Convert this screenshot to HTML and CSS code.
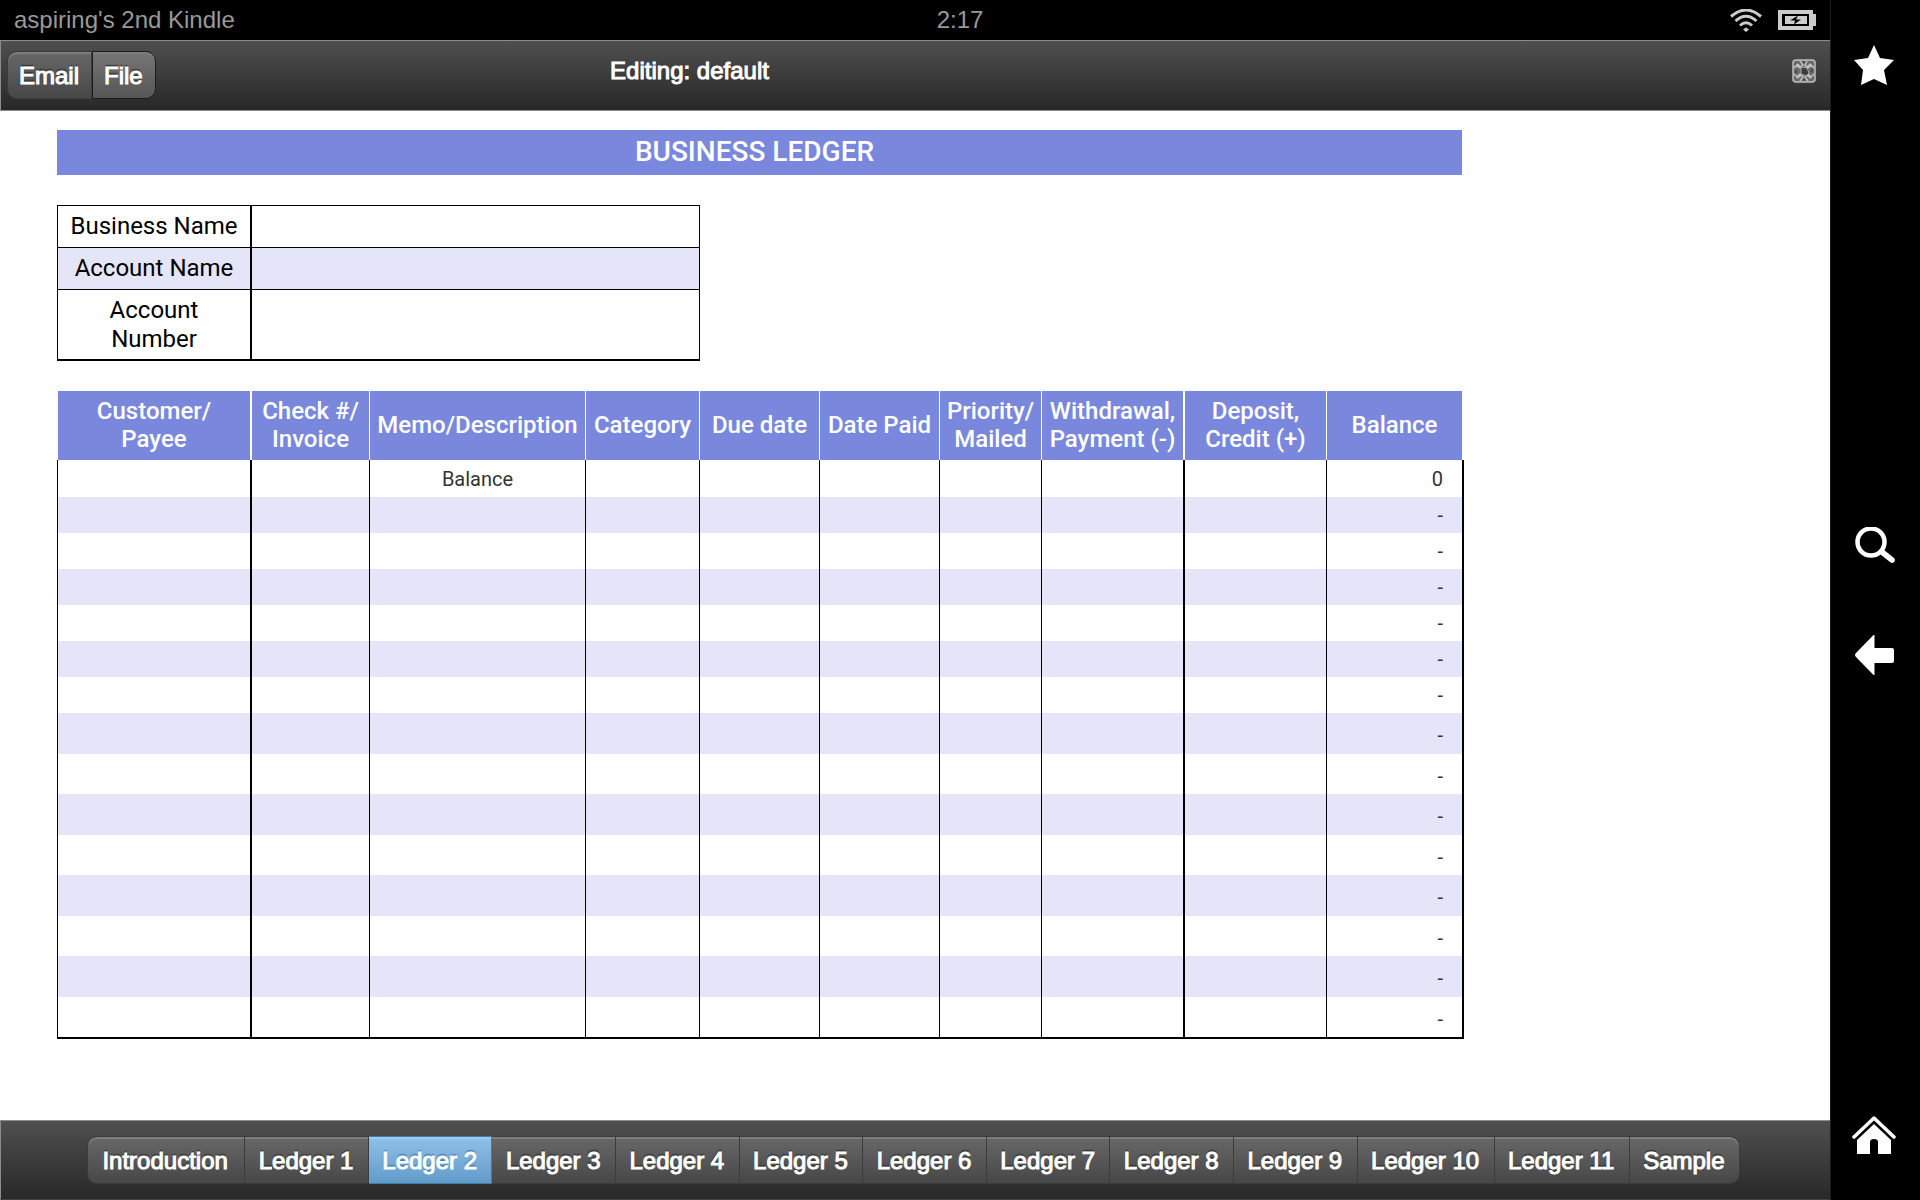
FILE: index.html
```
<!DOCTYPE html>
<html lang="en">
<head>
  <meta charset="UTF-8">
  <title>Business Ledger</title>
  <meta name="viewport" content="width=device-width, initial-scale=1.0">
  <link rel="stylesheet" href="styles.css">
</head>
<body>

  <div class="app">

    <!-- Device status bar -->
    <div class="status-bar">
      <span class="device">aspiring's 2nd Kindle</span>
      <span class="clock">2:17</span>
      <span class="status-icons">
        <svg width="32" height="23" viewBox="0 0 32 23" fill="none" stroke="#ccc" stroke-width="3">
          <path d="M1 7.500Q16-5.500 31 7.500"/>
          <path d="M5.500 12Q16 2.500 26.500 12"/>
          <path d="M10 16.500Q16 11 22 16.500"/>
          <path d="M16 18.500l3 2-3 2.500-3-2.500z" fill="#ccc" stroke="none"/>
        </svg>
        <svg width="38" height="20" viewBox="0 0 38 20">
          <path d="M0 0h35v4h3v12h-3v4H0zM4 4v12h27V4z" fill="#ccc" fill-rule="evenodd"/>
          <path d="M7 6h22v8H7z" fill="#ccc"/>
          <path d="M20 5.500l-8 5h5l-1 4 7-5h-5z" fill="#000"/>
        </svg>
      </span>
    </div>

    <!-- Toolbar -->
    <header class="toolbar">
      <div class="btn-group">
        <button type="button" class="bar-btn">Email</button>
        <button type="button" class="bar-btn raised">File</button>
      </div>
      <h1>Editing: default</h1>
      <button type="button" class="expand-btn" aria-label="Full screen">
        <svg width="24" height="24" viewBox="0 0 24 24" fill="none" stroke="#c0c0c0" stroke-width="1.500">
          <rect x="1" y="1" width="22" height="22" rx="3" fill="#6a6a6a"/>
          <path d="M2 9l3-3 3 3 3-3-3-4M15 2l-2 4 3 3 3-3 3 3M2 15l3 3 3-3 3 3-3 4M22 15l-3 3-3-3-3 3 3 4"/>
          <path d="M5 5l5 4M19 5l-5 4M5 19l5-4M19 19l-5-4" stroke-width="2"/>
          <path d="M9 8l6 1 2 5-3 3-5-2z" fill="#3c3c3c" stroke="#aaa" stroke-width="1"/>
          <path d="M4 11v3M20 10v3M11 3.500h2M11 20.500h2" stroke="#444"/>
        </svg>
      </button>
    </header>

    <!-- Sheet -->
    <main class="sheet">
      <h2 class="banner">BUSINESS LEDGER</h2>

      <table class="info-table">
        <tr>
          <th><label for="businessName">Business Name</label></th>
          <td><input type="text" id="businessName"></td>
        </tr>
        <tr class="shaded">
          <th><label for="accountName">Account Name</label></th>
          <td><input type="text" id="accountName"></td>
        </tr>
        <tr>
          <th><label for="accountNumber">Account Number</label></th>
          <td><input type="text" id="accountNumber"></td>
        </tr>
      </table>

      <table class="ledger-table">
        <colgroup>
          <col class="col-customer">
          <col class="col-check">
          <col class="col-memo">
          <col class="col-category">
          <col class="col-date">
          <col class="col-date">
          <col class="col-priority">
          <col class="col-amount">
          <col class="col-deposit">
          <col class="col-balance">
        </colgroup>
        <thead>
          <tr>
            <th class="thick">Customer/<br>Payee</th>
            <th>Check #/<br>Invoice</th>
            <th>Memo/Description</th>
            <th>Category</th>
            <th>Due date</th>
            <th>Date Paid</th>
            <th>Priority/<br>Mailed</th>
            <th class="thick">Withdrawal,<br>Payment (-)</th>
            <th>Deposit,<br>Credit (+)</th>
            <th class="thick">Balance</th>
          </tr>
        </thead>
        <tbody class="rows-short">
          <tr><td class="thick"></td><td></td><td>Balance</td><td></td><td></td><td></td><td></td><td class="thick"></td><td></td><td class="thick num">0</td></tr>
          <tr><td class="thick"></td><td></td><td></td><td></td><td></td><td></td><td></td><td class="thick"></td><td></td><td class="thick num">-</td></tr>
          <tr><td class="thick"></td><td></td><td></td><td></td><td></td><td></td><td></td><td class="thick"></td><td></td><td class="thick num">-</td></tr>
          <tr><td class="thick"></td><td></td><td></td><td></td><td></td><td></td><td></td><td class="thick"></td><td></td><td class="thick num">-</td></tr>
          <tr><td class="thick"></td><td></td><td></td><td></td><td></td><td></td><td></td><td class="thick"></td><td></td><td class="thick num">-</td></tr>
          <tr><td class="thick"></td><td></td><td></td><td></td><td></td><td></td><td></td><td class="thick"></td><td></td><td class="thick num">-</td></tr>
          <tr><td class="thick"></td><td></td><td></td><td></td><td></td><td></td><td></td><td class="thick"></td><td></td><td class="thick num">-</td></tr>
        </tbody>
        <tbody class="rows-tall">
          <tr><td class="thick"></td><td></td><td></td><td></td><td></td><td></td><td></td><td class="thick"></td><td></td><td class="thick num">-</td></tr>
          <tr><td class="thick"></td><td></td><td></td><td></td><td></td><td></td><td></td><td class="thick"></td><td></td><td class="thick num">-</td></tr>
          <tr><td class="thick"></td><td></td><td></td><td></td><td></td><td></td><td></td><td class="thick"></td><td></td><td class="thick num">-</td></tr>
          <tr><td class="thick"></td><td></td><td></td><td></td><td></td><td></td><td></td><td class="thick"></td><td></td><td class="thick num">-</td></tr>
          <tr><td class="thick"></td><td></td><td></td><td></td><td></td><td></td><td></td><td class="thick"></td><td></td><td class="thick num">-</td></tr>
          <tr><td class="thick"></td><td></td><td></td><td></td><td></td><td></td><td></td><td class="thick"></td><td></td><td class="thick num">-</td></tr>
          <tr><td class="thick"></td><td></td><td></td><td></td><td></td><td></td><td></td><td class="thick"></td><td></td><td class="thick num">-</td></tr>
          <tr><td class="thick"></td><td></td><td></td><td></td><td></td><td></td><td></td><td class="thick"></td><td></td><td class="thick num">-</td></tr>
        </tbody>
      </table>
    </main>

    <!-- Sheet tabs -->
    <nav class="tab-bar">
      <div class="btn-group">
        <button type="button" class="bar-btn">Introduction</button>
        <button type="button" class="bar-btn">Ledger 1</button>
        <button type="button" class="bar-btn active">Ledger 2</button>
        <button type="button" class="bar-btn">Ledger 3</button>
        <button type="button" class="bar-btn">Ledger 4</button>
        <button type="button" class="bar-btn">Ledger 5</button>
        <button type="button" class="bar-btn">Ledger 6</button>
        <button type="button" class="bar-btn">Ledger 7</button>
        <button type="button" class="bar-btn">Ledger 8</button>
        <button type="button" class="bar-btn">Ledger 9</button>
        <button type="button" class="bar-btn">Ledger 10</button>
        <button type="button" class="bar-btn">Ledger 11</button>
        <button type="button" class="bar-btn">Sample</button>
      </div>
    </nav>

  </div>

  <!-- Device side bar -->
  <aside class="side-bar">
    <button type="button" class="side-btn" aria-label="Favorites">
      <svg width="42" height="42" viewBox="0 0 42 42" fill="#fff">
        <path d="M21 1l6 13 14 2-10 10 3 15-13-6-13 6 2-15L1 16l14-2z"/>
      </svg>
    </button>
    <div class="side-group">
      <button type="button" class="side-btn" aria-label="Search">
        <svg width="42" height="38" viewBox="0 0 42 38">
          <circle cx="18" cy="15" r="13.500" fill="none" stroke="#fff" stroke-width="4.500"/>
          <path d="M29 25l10 8" stroke="#fff" stroke-width="5.500" stroke-linecap="round"/>
        </svg>
      </button>
      <button type="button" class="side-btn" aria-label="Back">
        <svg width="42" height="40" viewBox="0 0 42 40" fill="#fff">
          <path d="M20 .500c1-1 1.500-.500 1.500.500v12H39q2 0 2 2v11q0 2-2 2H21.500v11c0 1-.500 1.500-1.500.500L3 22q-2-2 0-4z"/>
        </svg>
      </button>
    </div>
    <button type="button" class="side-btn" aria-label="Home">
      <svg width="44" height="38" viewBox="0 0 44 38">
        <path d="M2 21L22 2l20 19" fill="none" stroke="#fff" stroke-width="3.500" stroke-linecap="round" stroke-linejoin="round"/>
        <path d="M22 8l17 16v14H26V26q0-3-4-3t-4 3v12H5V24z" fill="#fff"/>
      </svg>
    </button>
  </aside>

</body>
</html>
```
FILE: styles.css
```
* {
  box-sizing: border-box;
}

body {
  margin: 0;
  display: flex;
  min-height: 100vh;
  background: #000;
  font-family: "Liberation Sans", Arial, sans-serif;
  font-size: 24px;
}

button {
  font: inherit;
  border: none;
  background: none;
  padding: 0;
  cursor: pointer;
}

svg {
  display: block;
}

.app {
  flex: 1;
  display: flex;
  flex-direction: column;
  background: #fff;
}

/* status bar */
.status-bar {
  display: grid;
  grid-template-columns: 1fr auto 1fr;
  align-items: center;
  height: 40px;
  padding: 0 14px;
  background: #000;
  color: #999;
}

.clock {
  padding-left: 90px;
}

.status-icons {
  display: flex;
  justify-content: flex-end;
  align-items: center;
  gap: 16px;
}

/* toolbar and tab bar */
.toolbar,
.tab-bar {
  border: 1px solid #8c8c8c;
  border-right: none;
  background: linear-gradient(#4f4f4f, #282828);
}

.toolbar {
  display: grid;
  grid-template-columns: 1fr auto 1fr;
  align-items: start;
  height: 71px;
  padding: 10px 14px 0 6px;
}

.toolbar h1 {
  margin: 0;
  padding-right: 444px;
  color: #fff;
  font-size: 24px;
  font-weight: normal;
  line-height: 40px;
  -webkit-text-stroke: 1px #fff;
}

.tab-bar {
  height: 80px;
  padding: 15px 90px 0 86px;
  border-bottom-color: #444;
}

.btn-group {
  display: flex;
}

.bar-btn {
  flex: none;
  height: 48px;
  padding: 1px 12px 0 11px;
  border: 1px solid #3c3c3c;
  border-left-width: 0;
  background: linear-gradient(#686868, #474747);
  box-shadow: inset 0 2px 0 #7d7d7d;
  color: #fff;
  text-shadow: 0 -2px 1px #333;
  -webkit-text-stroke: 1px #fff;
}

.bar-btn:first-child {
  border-left-width: 1px;
  border-radius: 10px 0 0 10px;
}

.bar-btn:last-child {
  border-radius: 0 10px 10px 0;
}

.tab-bar .bar-btn {
  flex: 1 1 auto;
}

.tab-bar .bar-btn:first-child {
  padding: 1px 14px 0 12px;
}

.bar-btn.raised {
  border: 1px solid #1c1c1c;
  background: linear-gradient(#767676, #565656);
}

.bar-btn.active {
  border-color: #3d7ea6;
  background: linear-gradient(#90c0e8, #629bc9);
  box-shadow: inset 0 2px 0 #9fcbed;
  text-shadow: 0 -2px 1px #4a7ea8;
}

.expand-btn {
  justify-self: end;
  padding: 8px 0;
}

/* sheet */
.sheet {
  flex: 1;
  padding: 19px 366px 0 57px;
  font-family: Roboto, sans-serif;
}

.banner {
  margin: 0 2px 30px 0;
  padding-right: 10px;
  background: #7988dd;
  color: #fff;
  font-size: 28px;
  font-weight: 500;
  line-height: 44px;
  padding-bottom: 1px;
  text-align: center;
}

table {
  border-collapse: separate;
  border-spacing: 0;
  table-layout: fixed;
}

th,
td {
  padding: 0;
}

.info-table {
  width: 643px;
  margin-bottom: 30px;
  border: 1px solid #000;
  border-bottom-width: 2px;
}

.info-table th {
  width: 194px;
  padding: 6px 10px;
  border-right: 2px solid #000;
  color: #000;
  font-weight: normal;
  line-height: 29px;
}

.info-table tr + tr th,
.info-table tr + tr td {
  border-top: 1px solid #000;
}

.info-table tr:last-child th {
  padding-bottom: 5px;
}

.info-table input {
  display: block;
  width: 100%;
  border: none;
  background: transparent;
  font: inherit;
}

.shaded {
  background: #e4e5f9;
}

.ledger-table {
  width: 100%;
}

.col-customer { width: 195px; }
.col-check { width: 118px; }
.col-category { width: 114px; }
.col-date { width: 120px; }
.col-priority { width: 102px; }
.col-amount { width: 143px; }
.col-deposit { width: 142px; }
.col-balance { width: 137px; }

.ledger-table th {
  height: 69px;
  padding-bottom: 1px;
  border-right: 1px solid #fff;
  background: #7988dd;
  color: #fff;
  font-weight: 500;
  line-height: 28px;
  white-space: nowrap;
}

.ledger-table td {
  border-right: 1px solid #000;
  color: #333;
  font-size: 20px;
  line-height: 24px;
  text-align: center;
}

.ledger-table th:first-child {
  border-left: 1px solid #fff;
}

.ledger-table td:first-child {
  border-left: 1px solid #000;
}

.ledger-table .thick {
  border-right-width: 2px;
}

.ledger-table .num {
  padding-right: 19px;
  text-align: right;
}

.rows-short tr { height: 36px; }
.rows-short tr:first-child { height: 37px; }
.rows-tall tr:nth-child(odd) { height: 41px; }
.rows-tall tr:nth-child(even) { height: 40px; }

.rows-short tr:nth-child(even) td,
.rows-tall tr:nth-child(odd) td {
  background: #e4e5f9;
}

.rows-tall td {
  padding-top: 3px;
}

.rows-tall tr:last-child { height: 42px; }

.rows-tall tr:last-child td {
  border-bottom: 2px solid #000;
}

/* side bar */
.side-bar {
  display: flex;
  flex-direction: column;
  justify-content: space-between;
  align-items: center;
  width: 90px;
  padding: 44px 4px 46px 0;
  border-left: 1px solid #1c1c1c;
  background: #000;
}

.side-group {
  display: flex;
  flex-direction: column;
  gap: 70px;
}
```
